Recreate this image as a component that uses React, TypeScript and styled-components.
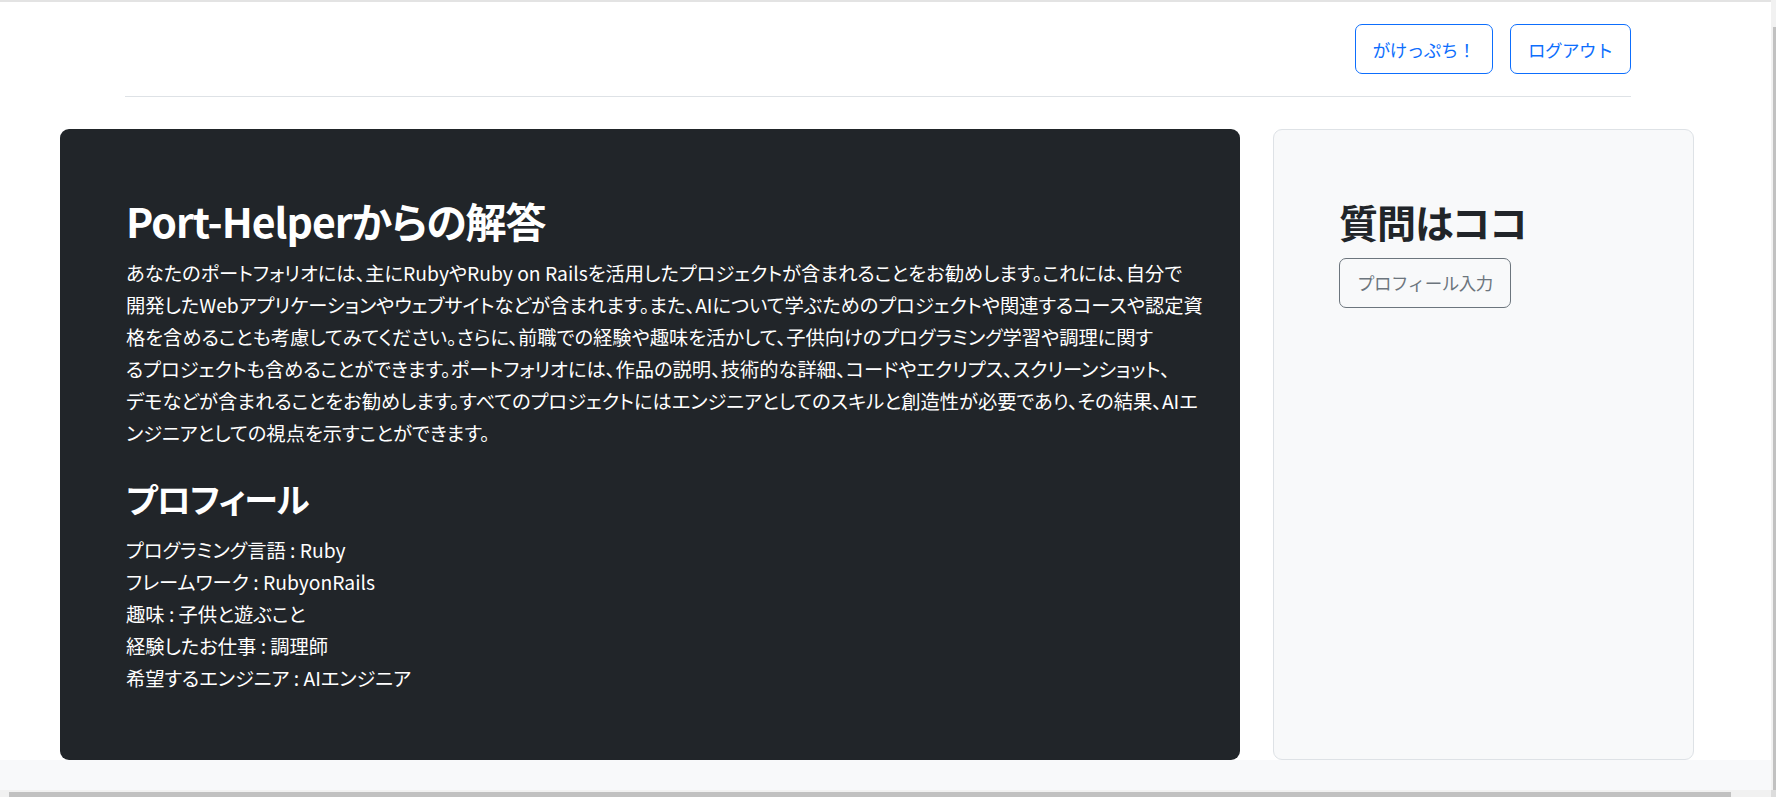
import React from "react";
import styled, { createGlobalStyle } from "styled-components";

// answer text, split the way the reference wraps it
const answerLines = [
  "あなたのポートフォリオには、主にRubyやRuby on Railsを活用したプロジェクトが含まれることをお勧めします。これには、自分で",
  "開発したWebアプリケーションやウェブサイトなどが含まれます。また、AIについて学ぶためのプロジェクトや関連するコースや認定資",
  "格を含めることも考慮してみてください。さらに、前職での経験や趣味を活かして、子供向けのプログラミング学習や調理に関す",
  "るプロジェクトも含めることができます。ポートフォリオには、作品の説明、技術的な詳細、コードやエクリプス、スクリーンショット、",
  "デモなどが含まれることをお勧めします。すべてのプロジェクトにはエンジニアとしてのスキルと創造性が必要であり、その結果、AIエ",
  "ンジニアとしての視点を示すことができます。"
];

const profile = [
  { label: "プログラミング言語", value: "Ruby" },
  { label: "フレームワーク", value: "RubyonRails" },
  { label: "趣味", value: "子供と遊ぶこと" },
  { label: "経験したお仕事", value: "調理師" },
  { label: "希望するエンジニア", value: "AIエンジニア" }
];

export default function App() {
  return (
    <>
      <GlobalStyle />
      <Frame>
        <Viewport>
          <Header>
            <OutlineButton>がけっぷち！</OutlineButton>
            <OutlineButton>ログアウト</OutlineButton>
          </Header>
          <Main>
            <AnswerCard>
              <Title>Port-Helperからの解答</Title>
              <Answer>
                {answerLines.map((line, i) => (
                  <Line key={i}>{line}</Line>
                ))}
              </Answer>
              <SubTitle>プロフィール</SubTitle>
              {profile.map((p) => (
                <Line key={p.label}>
                  {p.label} : {p.value}
                </Line>
              ))}
            </AnswerCard>
            <QuestionCard>
              <QuestionTitle>質問はココ</QuestionTitle>
              <OutlineButton variant="secondary">プロフィール入力</OutlineButton>
            </QuestionCard>
          </Main>
          <Footer />
        </Viewport>
        <VTrack>
          <VThumb />
        </VTrack>
        <HTrack>
          <HThumb />
        </HTrack>
        <Corner />
      </Frame>
    </>
  );
}

const GlobalStyle = createGlobalStyle`
  html, body {
    margin: 0;
    padding: 0;
    background: #fff;
    overflow: hidden;
  }
  body {
    font-family: "Noto Sans CJK JP", "Noto Sans", sans-serif;
    font-feature-settings: "palt";
    color: #212529;
  }
`;

const Frame = styled.div`
  display: grid;
  grid-template-columns: 1771px 5px;
  grid-template-rows: 790px 7px;
  width: 1776px;
  height: 797px;
`;

const Viewport = styled.div`
  display: flex;
  flex-direction: column;
  overflow: hidden;
  border-top: 2px solid #e3e3e3;
  background: #fff;
`;

const Header = styled.header`
  display: flex;
  justify-content: flex-end;
  gap: 17px;
  width: 1506px;
  margin-left: 125px;
  padding: 22px 0;
  border-bottom: 1px solid #dee2e6;
`;

const OutlineButton = styled.button<{ variant?: "primary" | "secondary" }>`
  height: 50px;
  padding: 0 17px;
  font-family: inherit;
  font-size: 17.5px;
  letter-spacing: -0.5px;
  background: transparent;
  border-radius: 7px;
  cursor: pointer;
  color: ${(p) => (p.variant === "secondary" ? "#6c757d" : "#0d6efd")};
  border: 1px solid
    ${(p) => (p.variant === "secondary" ? "#6c757d" : "#0d6efd")};
`;

const Main = styled.main`
  display: flex;
  align-items: stretch;
  gap: 33px;
  width: 1634px;
  margin: 32px 0 0 60px;
`;

const AnswerCard = styled.section`
  width: 1180px;
  box-sizing: border-box;
  padding: 64px 66px 66px;
  background: #212529;
  color: #fff;
  border-radius: 9px;
`;

const Title = styled.h1`
  margin: 0 0 9px;
  font-size: 41px;
  font-weight: 700;
  letter-spacing: -1px;
  line-height: 54.7px;
`;

const Answer = styled.div`
  margin-bottom: 27px;
`;

const Line = styled.div`
  font-size: 19.3px;
  line-height: 32px;
  white-space: nowrap;
`;

const SubTitle = styled.h2`
  margin: 0 0 13px;
  font-size: 34px;
  font-weight: 700;
  letter-spacing: -1px;
  line-height: 45.6px;
`;

const QuestionCard = styled.aside`
  flex: 1;
  display: flex;
  flex-direction: column;
  align-items: flex-start;
  padding: 65px 65px;
  background: #f8f9fa;
  border: 1px solid #dee2e6;
  border-radius: 9px;
`;

const QuestionTitle = styled.h1`
  margin: 0 0 10px;
  font-size: 39px;
  font-weight: 700;
  letter-spacing: -1px;
  line-height: 52.8px;
  color: #212529;
`;

const Footer = styled.footer`
  flex: 1;
  background: #f8f9fa;
`;

const VTrack = styled.div`
  display: flex;
  flex-direction: column;
  padding: 27px 0 0 2px;
  background: #f1f1f1;
`;

const VThumb = styled.div`
  flex: 1;
  background: #c1c1c1;
`;

const HTrack = styled.div`
  display: flex;
  padding: 2px 40px 0 9px;
  background: #f1f1f1;
`;

const HThumb = styled.div`
  flex: 1;
  background: #c1c1c1;
`;

const Corner = styled.div`
  background: #dcdcdc;
`;
